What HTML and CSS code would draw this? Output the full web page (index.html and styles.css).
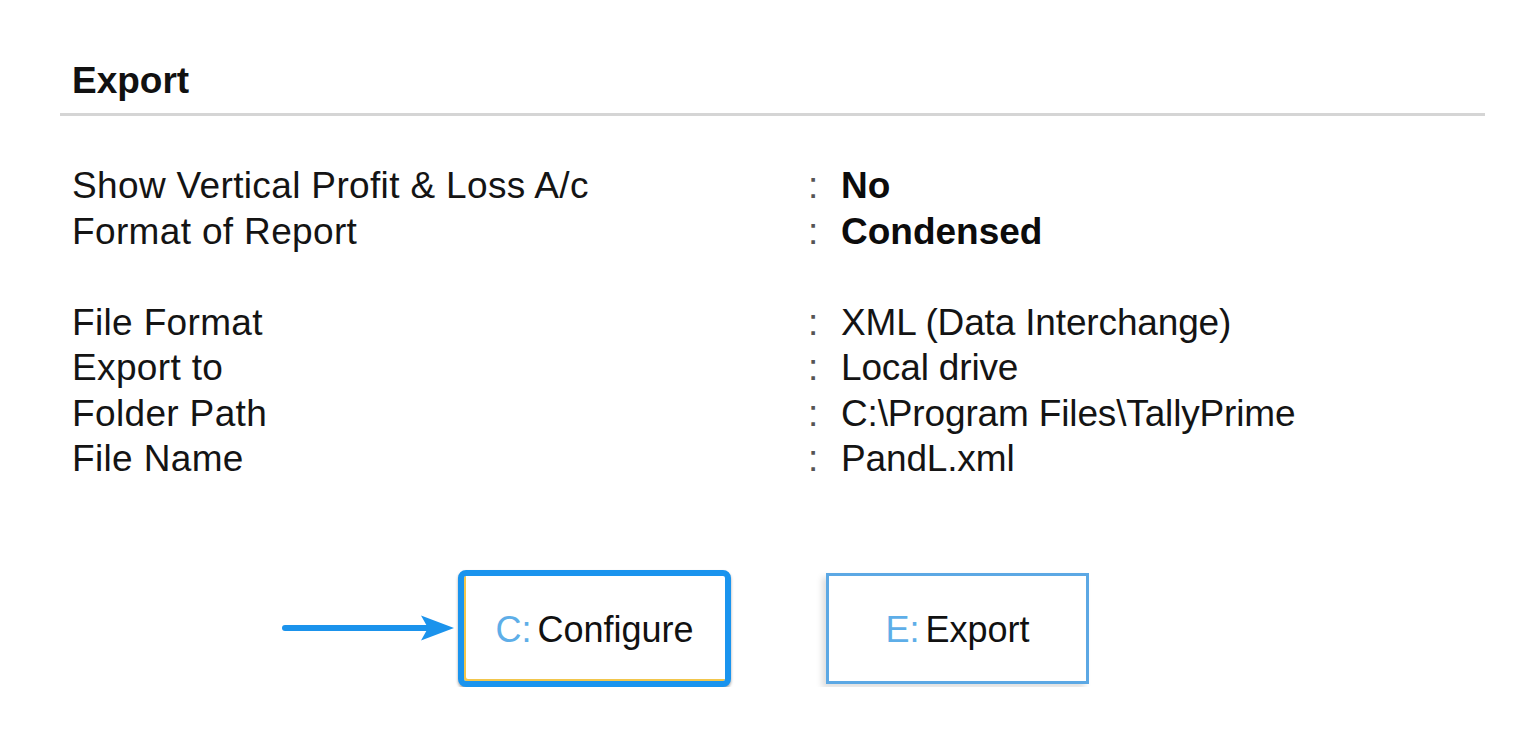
FILE: index.html
```html
<!DOCTYPE html>
<html lang="en">
<head>
<meta charset="utf-8">
<title>Export</title>
<link rel="stylesheet" href="styles.css">
</head>
<body>
<main class="panel">
  <h1 class="title">Export</h1>
  <div class="rows">
    <div class="row"><span class="label">Show Vertical Profit &amp; Loss A/c</span><span class="colon">:</span><span class="value strong">No</span></div>
    <div class="row"><span class="label">Format of Report</span><span class="colon">:</span><span class="value strong">Condensed</span></div>
    <div class="row blank"></div>
    <div class="row"><span class="label">File Format</span><span class="colon">:</span><span class="value">XML (Data Interchange)</span></div>
    <div class="row"><span class="label">Export to</span><span class="colon">:</span><span class="value">Local drive</span></div>
    <div class="row"><span class="label">Folder Path</span><span class="colon">:</span><span class="value">C:\Program Files\TallyPrime</span></div>
    <div class="row"><span class="label">File Name</span><span class="colon">:</span><span class="value">PandL.xml</span></div>
  </div>
  <div class="actions">
    <svg class="arrow" width="174" height="30" viewBox="0 0 174 30" aria-hidden="true">
      <line x1="3" y1="15" x2="145" y2="15" stroke="#1b93ec" stroke-width="6" stroke-linecap="round"/>
      <path d="M139 2.5 L172 15 L139 27.5 L146 15 Z" fill="#1b93ec"/>
    </svg>
    <button class="btn btn-focus"><span class="key">C:</span>Configure</button>
    <button class="btn btn-plain"><span class="key">E:</span>Export</button>
  </div>
</main>
</body>
</html>
```
FILE: styles.css
```css
html, body {
  margin: 0;
  padding: 0;
  background: #ffffff;
}

body {
  font-family: "Liberation Sans", Arial, sans-serif;
  color: #141414;
}

.panel {
  padding: 58px 51px 0 60px;
}

.title {
  margin: 0;
  padding: 0 0 10px 12px;
  font-size: 37px;
  line-height: 45px;
  font-weight: bold;
  color: #111;
  border-bottom: 3px solid #d5d5d5;
}

.rows {
  padding: 47px 0 0 12px;
}

.row {
  display: flex;
  font-size: 37px;
  line-height: 45.5px;
  height: 45.5px;
  white-space: nowrap;
}

.label {
  width: 736px;
  flex: none;
  letter-spacing: 0.35px;
}

.colon {
  width: 33px;
  flex: none;
  color: #555;
}

.value {
  letter-spacing: -0.15px;
}

.value.strong {
  font-weight: bold;
  color: #0c0c0c;
  letter-spacing: 0;
}

.actions {
  display: flex;
  align-items: center;
  padding: 88px 0 0 222px;
}

.arrow {
  display: block;
  flex: none;
  margin-right: 2px;
}

.btn {
  font-family: "Liberation Sans", Arial, sans-serif;
  font-size: 36px;
  color: #111;
  background: #fff;
  display: flex;
  align-items: center;
  justify-content: center;
  padding: 4px 0 0;
  cursor: pointer;
}

.key {
  color: #5eaee8;
  margin-right: 6px;
}

.btn-focus {
  width: 273px;
  height: 117px;
  border: 6px solid #1a94ee;
  border-radius: 8px;
  box-shadow: inset 2px -2px 0 0 #f2c64c, 0 2px 3px rgba(0, 0, 0, 0.35);
}

.btn-plain {
  margin-left: 95px;
  width: 263px;
  height: 111px;
  border: 3px solid #5ca8e4;
  border-radius: 0;
  box-shadow: -4px 4px 6px rgba(0, 0, 0, 0.13);
}
```
